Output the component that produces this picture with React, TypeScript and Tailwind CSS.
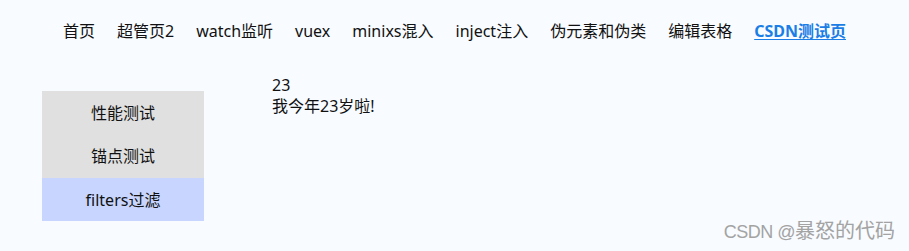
const navItems = [
  "首页",
  "超管页2",
  "watch监听",
  "vuex",
  "minixs混入",
  "inject注入",
  "伪元素和伪类",
  "编辑表格",
];

const sideItems = ["性能测试", "锚点测试"];

export default function App() {
  return (
    <div
      className="relative h-[251px] w-[909px] overflow-hidden bg-[#f8fbff] text-[16px] text-[#111]"
      style={{ fontFamily: '"Noto Sans", "Noto Sans CJK SC", sans-serif' }}
    >
      <nav className="flex justify-center gap-[22px] pt-[19px] leading-[24px]">
        {navItems.map((item) => (
          <a key={item} className="cursor-pointer">
            {item}
          </a>
        ))}
        <a className="cursor-pointer font-bold text-[#1a7ee6] underline underline-offset-2">
          CSDN测试页
        </a>
      </nav>

      <div className="mt-[32px] flex items-start pl-[42px]">
        <ul className="mt-[16px] w-[162px] text-center">
          {sideItems.map((item) => (
            <li key={item} className="flex h-[43.5px] items-center justify-center bg-[#e0e0e0]">
              {item}
            </li>
          ))}
          <li className="flex h-[43px] items-center justify-center bg-[#c8d6ff]">
            filters过滤
          </li>
        </ul>
        <div className="ml-[68px] leading-[21px]">
          <div>23</div>
          <div>我今年23岁啦!</div>
        </div>
      </div>

      <div
        className="absolute bottom-[5px] right-[14px] flex items-baseline text-[#a3a3a3]"
        style={{ fontFamily: '"Liberation Sans", "Noto Sans CJK SC", sans-serif' }}
      >
        <span className="text-[18px] tracking-[-0.5px]">CSDN @</span>
        <span className="text-[20px]">暴怒的代码</span>
      </div>
    </div>
  );
}
